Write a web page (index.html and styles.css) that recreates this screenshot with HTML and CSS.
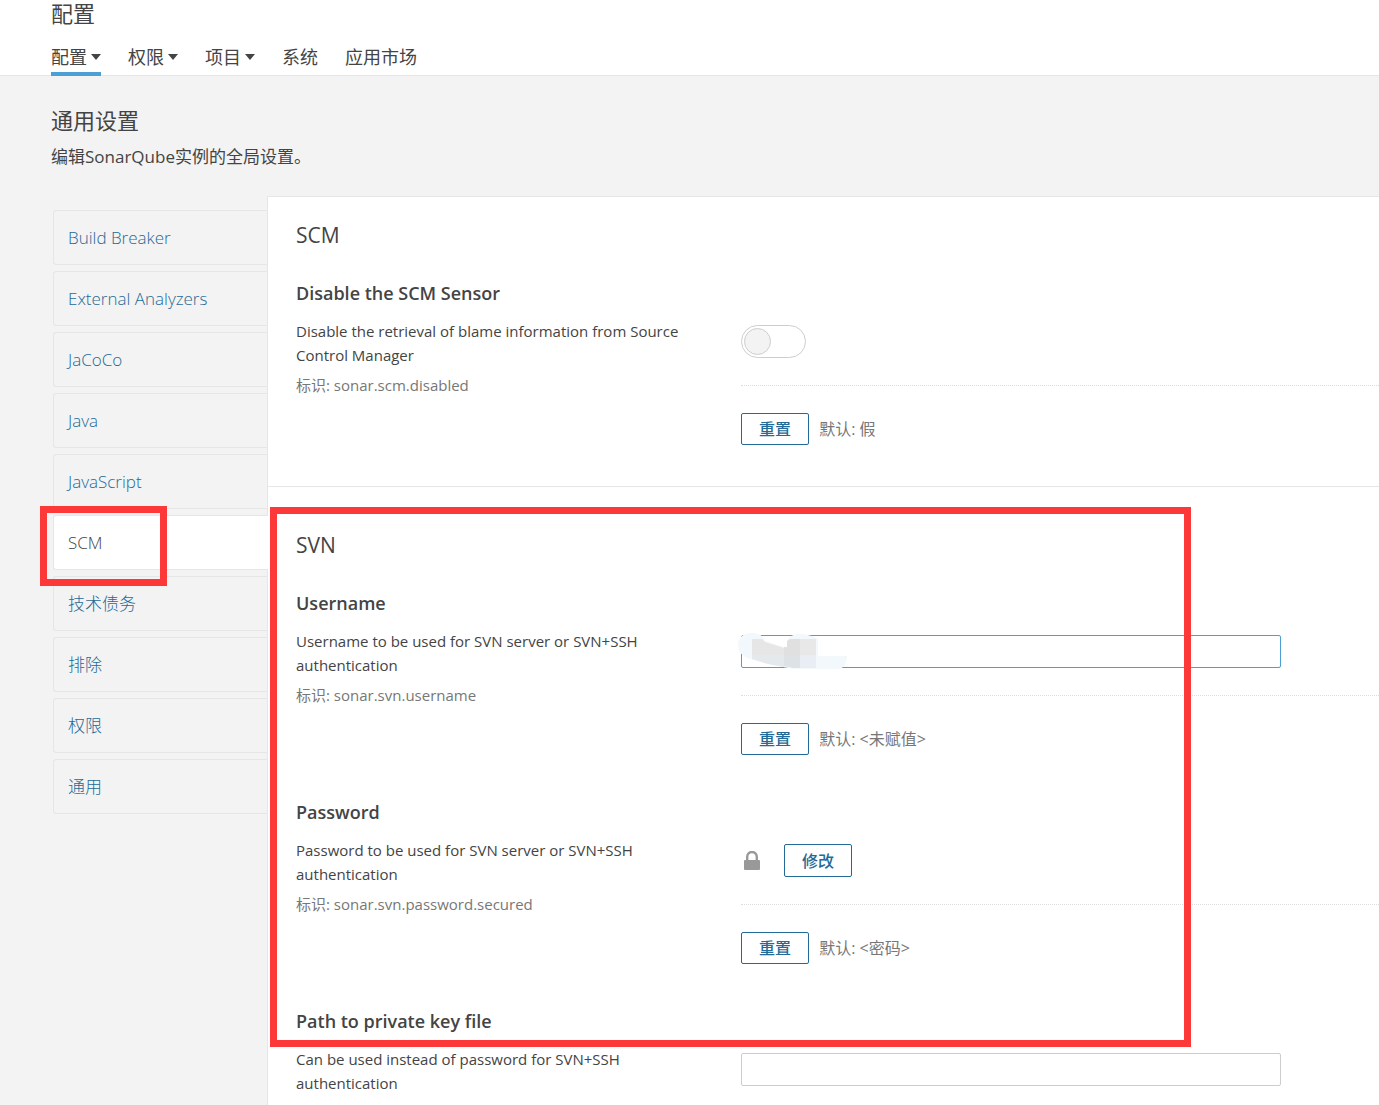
FILE: index.html
```html
<!DOCTYPE html>
<html lang="zh-CN">
<head>
    <meta charset="UTF-8">
    <meta name="viewport" content="width=device-width, initial-scale=1.0">
    <title>通用设置</title>
    <link rel="stylesheet" href="styles.css">
</head>
<body>
    <header class="page-header">
        <h1 class="header-title">配置</h1>
        <nav class="tabs">
            <a href="#" class="tab active">配置<svg class="caret" viewBox="0 0 10 6"><path d="M0 0h10L5 6z"/></svg></a>
            <a href="#" class="tab">权限<svg class="caret" viewBox="0 0 10 6"><path d="M0 0h10L5 6z"/></svg></a>
            <a href="#" class="tab">项目<svg class="caret" viewBox="0 0 10 6"><path d="M0 0h10L5 6z"/></svg></a>
            <a href="#" class="tab">系统</a>
            <a href="#" class="tab">应用市场</a>
        </nav>
    </header>

    <main class="page">
        <div class="page-intro">
            <h2 class="page-title">通用设置</h2>
            <p class="page-desc">编辑SonarQube实例的全局设置。</p>
        </div>

        <div class="settings-layout">
            <nav class="side-menu">
                <a href="#" class="side-item">Build Breaker</a>
                <a href="#" class="side-item">External Analyzers</a>
                <a href="#" class="side-item">JaCoCo</a>
                <a href="#" class="side-item">Java</a>
                <a href="#" class="side-item">JavaScript</a>
                <a href="#" class="side-item active">SCM<span class="mark mark-menu"></span></a>
                <a href="#" class="side-item">技术债务</a>
                <a href="#" class="side-item">排除</a>
                <a href="#" class="side-item">权限</a>
                <a href="#" class="side-item">通用</a>
            </nav>

            <div class="panel">
                <section class="group">
                    <h2 class="group-title">SCM</h2>
                    <div class="setting">
                        <div class="setting-info">
                            <h3 class="setting-name">Disable the SCM Sensor</h3>
                            <label class="setting-desc" for="scm-disabled">Disable the retrieval of blame information from Source Control Manager</label>
                            <p class="setting-key">标识: sonar.scm.disabled</p>
                        </div>
                        <div class="setting-value">
                            <div class="control">
                                <input type="checkbox" class="toggle" id="scm-disabled">
                            </div>
                            <div class="actions">
                                <button type="button" class="button">重置</button>
                                <span class="default">默认: 假</span>
                            </div>
                        </div>
                    </div>
                </section>

                <section class="group">
                    <h2 class="group-title">SVN</h2>
                    <div class="setting">
                        <div class="setting-info">
                            <h3 class="setting-name">Username</h3>
                            <label class="setting-desc" for="svn-username">Username to be used for SVN server or SVN+SSH authentication</label>
                            <p class="setting-key">标识: sonar.svn.username</p>
                        </div>
                        <div class="setting-value">
                            <div class="control">
                                <input type="text" class="text-input focused" id="svn-username">
                                <svg class="smudge" viewBox="0 0 110 36">
                                    <path fill="#f2f8fc" d="M0 12C0 4 6 0 14 0c8 0 12 4 13 8l22 7V8c2-5 7-7 12-7 8 0 14 2 19 5v17h29c0 6-3 12-8 13H55C40 33 27 31 16 27 6 25 0 20 0 12z"/>
                                    <path fill="#e6e6e6" d="M14 6h10l3 3 19 6v7H14z"/>
                                    <path fill="#e4e9ec" d="M14 22h32v12L30 31l-16-5z"/>
                                    <path fill="#e0e0e0" d="M46 14h3V8l3-2h10v16H46z"/>
                                    <path fill="#dde2e5" d="M46 22h16v13h-7l-9-2z"/>
                                    <path fill="#e8e8e8" d="M62 6h16v16H62z"/>
                                    <path fill="#e8eef3" d="M62 22h16v13H62z"/>
                                </svg>
                            </div>
                            <div class="actions">
                                <button type="button" class="button">重置</button>
                                <span class="default">默认: &lt;未赋值&gt;</span>
                            </div>
                        </div>
                    </div>
                    <div class="setting">
                        <div class="setting-info">
                            <h3 class="setting-name">Password</h3>
                            <p class="setting-desc">Password to be used for SVN server or SVN+SSH authentication</p>
                            <p class="setting-key">标识: sonar.svn.password.secured</p>
                        </div>
                        <div class="setting-value">
                            <div class="control">
                                <svg class="lock" viewBox="0 0 16 19">
                                    <path fill="none" stroke="#999" stroke-width="2.4" d="M3.2 10V5.8a4.8 4.8 0 0 1 9.6 0V10"/>
                                    <rect y="9" width="16" height="10" rx="1" fill="#999"/>
                                </svg>
                                <button type="button" class="button">修改</button>
                            </div>
                            <div class="actions">
                                <button type="button" class="button">重置</button>
                                <span class="default">默认: &lt;密码&gt;</span>
                            </div>
                        </div>
                    </div>
                    <div class="setting">
                        <div class="setting-info">
                            <h3 class="setting-name">Path to private key file</h3>
                            <label class="setting-desc" for="svn-key">Can be used instead of password for SVN+SSH authentication</label>
                        </div>
                        <div class="setting-value">
                            <div class="control">
                                <input type="text" class="text-input" id="svn-key">
                            </div>
                        </div>
                    </div>
                    <span class="mark mark-group"></span>
                </section>
            </div>
        </div>
    </main>
</body>
</html>
```

FILE: styles.css
```css
*,
*::before {
    box-sizing: border-box;
}

body {
    display: flex;
    flex-direction: column;
    height: 100vh;
    margin: 0;
    overflow: hidden;
    background-color: #f3f3f3;
    color: #444;
    font-family: "Open Sans", "Noto Sans CJK SC", sans-serif;
    font-size: 15px;
    line-height: 24px;
}

h1, h2, h3, p {
    margin: 0;
    font-weight: normal;
}

a {
    color: #236a97;
    text-decoration: none;
}

.page-header {
    flex: none;
    padding-left: 51px;
    background-color: #fff;
    border-bottom: 1px solid #e6e6e6;
}

.header-title {
    font-size: 22px;
    line-height: 26px;
}

.tabs {
    display: flex;
    gap: 27px;
    margin-top: 15px;
    margin-bottom: -1px;
}

.tab {
    display: flex;
    align-items: center;
    gap: 4px;
    height: 35px;
    border-bottom: 4px solid transparent;
    color: #444;
    font-size: 18px;
}

.tab.active {
    border-bottom-color: #4b9fd5;
}

.caret {
    width: 10px;
    height: 6px;
    fill: #444;
}

.page {
    display: flex;
    flex: 1;
    flex-direction: column;
    min-height: 0;
    padding-left: 51px;
}

.page-intro {
    padding: 29px 0 27px;
}

.page-title {
    font-size: 22px;
    line-height: 30px;
}

.page-desc {
    margin-top: 10px;
    font-size: 17px;
}

.settings-layout {
    display: flex;
    flex: 1;
    min-height: 0;
}

.side-menu {
    display: flex;
    flex: none;
    flex-direction: column;
    gap: 6px;
    width: 216px;
    padding: 14px 0 0 2px;
}

.side-item {
    position: relative;
    padding: 15px 14px 14px;
    border: 1px solid #e6e6e6;
    border-right: 0;
    border-radius: 3px 0 0 3px;
    font-size: 17px;
    font-weight: 300;
}

.side-item.active {
    z-index: 1;
    margin-right: -1px;
    background-color: #fff;
    color: #444;
}

.panel {
    flex: 1;
    background-color: #fff;
    border: 1px solid #e6e6e6;
    border-width: 1px 0 0 1px;
}

.group {
    position: relative;
    padding: 23px 0 41px 28px;
}

.group + .group {
    padding-top: 43px;
    border-top: 1px solid #e6e6e6;
}

.group-title {
    margin-bottom: 31px;
    font-size: 21px;
    line-height: 30px;
}

.setting {
    display: grid;
    grid-template-columns: 411fr 589fr;
}

.setting + .setting {
    margin-top: 45px;
}

.setting-name {
    font-size: 18px;
    font-weight: 600;
}

.setting-desc {
    display: block;
    margin-top: 14px;
    padding-right: 50px;
}

.setting-key {
    margin-top: 6px;
    color: #777;
}

.setting-value {
    padding-top: 44px;
}

.control {
    display: flex;
    position: relative;
    align-items: center;
    height: 33px;
}

.toggle {
    width: 65px;
    height: 33px;
    margin: 0;
    padding: 2px;
    appearance: none;
    background-color: #fff;
    border: 1px solid #cdcdcd;
    border-radius: 17px;
}

.toggle::before {
    content: "";
    display: block;
    width: 27px;
    height: 27px;
    background-color: #f3f3f3;
    border: 1px solid #cdcdcd;
    border-radius: 50%;
}

.toggle:checked::before {
    margin-left: auto;
}

.text-input {
    width: 100%;
    max-width: 540px;
    height: 33px;
    padding: 0 8px;
    background-color: #fff;
    border: 1px solid #cdcdcd;
    border-radius: 2px;
    font: inherit;
    color: inherit;
    outline: none;
}

.text-input.focused,
.text-input:focus {
    border-color: #4b9fd5;
}

.smudge {
    position: absolute;
    top: -2px;
    left: -3px;
    width: 110px;
    height: 36px;
}

.lock {
    width: 16px;
    height: 19px;
    margin: 0 24px 0 3px;
}

.actions {
    display: flex;
    align-items: center;
    gap: 10px;
    margin-top: 27px;
    padding-top: 27px;
    border-top: 1px dotted #ddd;
}

.button {
    height: 32px;
    padding: 0 17px;
    background-color: #fff;
    border: 1px solid #236a97;
    border-radius: 2px;
    color: #236a97;
    font: inherit;
    font-size: 16px;
    font-weight: 500;
}

.control .button {
    height: 33px;
}

.default {
    color: #777;
    font-size: 16px;
}

/* red highlight frames */
.mark {
    position: absolute;
    z-index: 2;
    border: 7px solid #fd3838;
    pointer-events: none;
}

.mark-menu {
    top: -10px;
    left: -14px;
    width: 127px;
    height: 80px;
}

.mark-group {
    top: 20px;
    left: 2px;
    width: 921px;
    height: 540px;
}
```
